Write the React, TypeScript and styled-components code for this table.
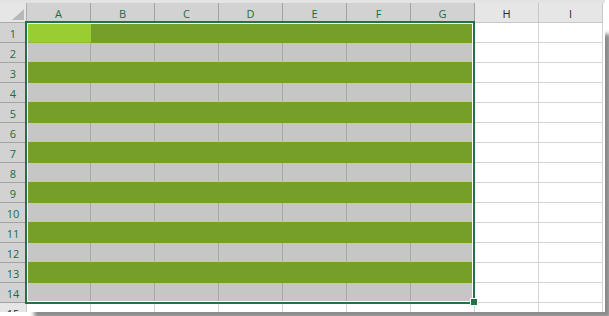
import React from 'react'
import styled, { createGlobalStyle, css } from 'styled-components'

const GlobalStyle = createGlobalStyle`
  html, body {
    margin: 0;
    padding: 0;
    background: #ffffff;
  }
`

const COLS = ['A', 'B', 'C', 'D', 'E', 'F', 'G', 'H', 'I']
const ROWS = Array.from({ length: 15 }, (_, i) => i + 1)
const SELECTED_COLS = 7
const SELECTED_ROWS = 14

const GREEN = '#769f29'
const ACTIVE = '#9acd32'
const SHADE = '#c6c6c6'
const SHADE_LINE = '#a8a8a8'

const Page = styled.div`
  width: 609px;
  height: 316px;
  overflow: hidden;
  background: #ffffff;
`

const Frame = styled.div`
  position: relative;
  width: 605px;
  height: 312px;
  overflow: hidden;
  background: #ffffff;
  box-shadow: 20px 20px 4px -14px #8c8c8c;
`

const TopBand = styled.div`
  height: 3px;
  background: #e3e3e3;
`

const Grid = styled.div`
  display: grid;
  grid-template-columns: 27px repeat(9, 64px);
  grid-auto-rows: 20px;
  font-family: 'Open Sans', 'Liberation Sans', sans-serif;
  font-size: 11px;
`

const Corner = styled.div`
  box-sizing: border-box;
  display: flex;
  justify-content: flex-end;
  align-items: flex-end;
  padding: 0 2px 2px 0;
  background: #e6e6e6;
  border-right: 1px solid #ababab;
  border-bottom: 1px solid #ababab;
`

const CornerTriangle = styled.div`
  width: 0;
  height: 0;
  border-left: 12px solid transparent;
  border-bottom: 11px solid #b8b8b8;
`

const header = css<{ $selected: boolean }>`
  box-sizing: border-box;
  display: flex;
  align-items: center;
  justify-content: center;
  background: ${(p) => (p.$selected ? '#d2d2d2' : '#e6e6e6')};
  color: ${(p) => (p.$selected ? '#1d6a43' : '#262626')};
  border-right: 1px solid ${(p) => (p.$selected ? '#a3a3a3' : '#c8c8c8')};
  border-bottom: 1px solid ${(p) => (p.$selected ? '#a3a3a3' : '#c8c8c8')};
  line-height: 1;
`

const ColHeader = styled.div<{ $selected: boolean }>`
  ${header}
  padding-top: 1px;
`

const RowHeader = styled.div<{ $selected: boolean }>`
  ${header}
  padding-top: 1px;
`

type Fill = 'active' | 'green' | 'shade' | 'plain'

const fillColor: Record<Fill, string> = {
  active: ACTIVE,
  green: GREEN,
  shade: SHADE,
  plain: '#ffffff',
}

const Cell = styled.div<{ $fill: Fill; $below: Fill }>`
  box-sizing: border-box;
  background: ${(p) => fillColor[p.$fill]};
  border-right: 1px solid
    ${(p) =>
      p.$fill === 'plain' ? '#d4d4d4' : p.$fill === 'shade' ? SHADE_LINE : fillColor[p.$fill]};
  border-bottom: 1px solid
    ${(p) => {
      if (p.$fill === 'plain') return '#d4d4d4'
      if (p.$fill === 'shade') return p.$below === 'green' ? GREEN : SHADE_LINE
      return p.$fill === 'active' ? '#8cbd2e' : GREEN
    }};
`

const Selection = styled.div`
  position: absolute;
  left: 25px;
  top: 21px;
  width: 450px;
  height: 283px;
  box-sizing: border-box;
  border: 2px solid #217346;
  box-shadow: inset 0 0 0 1px #ffffff;
  pointer-events: none;
`

const FillHandle = styled.div`
  position: absolute;
  left: 470px;
  top: 298px;
  width: 8px;
  height: 8px;
  box-sizing: border-box;
  border: 1px solid #ffffff;
  background: #217346;
`

function cellFill(row: number, col: number): Fill {
  if (row > SELECTED_ROWS || col >= SELECTED_COLS) return 'plain'
  if (row % 2 === 1) return row === 1 && col === 0 ? 'active' : 'green'
  return 'shade'
}

export default function App() {
  return (
    <Page>
      <GlobalStyle />
      <Frame>
        <TopBand />
        <Grid>
          <Corner>
            <CornerTriangle />
          </Corner>
          {COLS.map((c, i) => (
            <ColHeader key={c} $selected={i < SELECTED_COLS}>
              {c}
            </ColHeader>
          ))}
          {ROWS.map((r) => (
            <React.Fragment key={r}>
              <RowHeader $selected={r <= SELECTED_ROWS}>{r}</RowHeader>
              {COLS.map((c, i) => (
                <Cell key={c} $fill={cellFill(r, i)} $below={cellFill(r + 1, i)} />
              ))}
            </React.Fragment>
          ))}
        </Grid>
        <Selection />
        <FillHandle />
      </Frame>
    </Page>
  )
}
